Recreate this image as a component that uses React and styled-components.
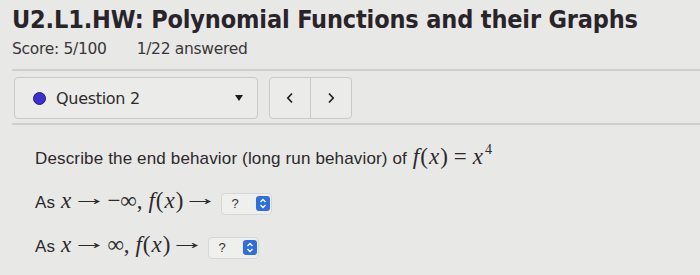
import React from "react"
import styled, { createGlobalStyle } from "styled-components"

const Global = createGlobalStyle`
  body {
    margin: 0;
    background: #e8e8e6;
    font-family: "DejaVu Sans", Verdana, sans-serif;
    color: #2b2829;
  }
`

const Page = styled.div`
  width: 700px;
  height: 275px;
  overflow: hidden;
  padding-top: 4px;
  box-sizing: border-box;
`
const Header = styled.div`
  padding-left: 12px;
`
const Title = styled.h1`
  margin: 0;
  font-family: "DejaVu Sans Condensed", "DejaVu Sans", sans-serif;
  font-stretch: condensed;
  font-size: 25px;
  font-weight: bold;
  line-height: 32px;
  letter-spacing: -0.15px;
  color: #29242a;
  white-space: nowrap;
`
const Meta = styled.div`
  display: flex;
  gap: 30px;
  margin-top: 4px;
  font-size: 15.5px;
  color: #3a3739;
  letter-spacing: -0.3px;
`
const Divider = styled.div`
  height: 2px;
  margin-left: 12px;
  background: #cfcfcd;
  margin-top: ${p => p.$top || 0}px;
`
const NavRow = styled.div`
  display: flex;
  gap: 11px;
  padding: 6px 0 4px 14px;
`
const Select = styled.div`
  width: 244px;
  height: 42px;
  box-sizing: border-box;
  border: 1.5px solid #c9c9c7;
  border-radius: 4px;
  background: #ebebe9;
  display: flex;
  align-items: center;
  padding: 0 14px 0 18px;
  font-size: 16px;
  color: #2e2b2d;
  letter-spacing: -0.3px;
`
const Dot = styled.span`
  width: 13px;
  height: 13px;
  border-radius: 50%;
  background: #3b2fcf;
  border: 1px solid #221c7a;
  box-sizing: border-box;
  margin-right: 10px;
`
const Caret = styled.span`
  margin-left: auto;
  width: 0;
  height: 0;
  border-left: 4.5px solid transparent;
  border-right: 4.5px solid transparent;
  border-top: 6px solid #1f1c1e;
`
const Pager = styled.div`
  display: flex;
  height: 42px;
  border: 1.5px solid #c9c9c7;
  border-radius: 4px;
  box-sizing: border-box;
  background: #ebebe9;
`
const PageBtn = styled.div`
  width: 40px;
  display: flex;
  align-items: center;
  justify-content: center;
  border-left: ${p => (p.$split ? "1.5px solid #c9c9c7" : "none")};
  svg { display: block; }
`
const Body = styled.div`
  padding: 18px 0 0 35px;
  font-family: "Liberation Sans", Arial, sans-serif;
  font-size: 17px;
  letter-spacing: 0.15px;
  color: #2c292b;
`
const Line = styled.div`
  height: 28px;
  line-height: 28px;
  margin-top: ${p => p.$top || 0}px;
  white-space: nowrap;
`
const M = styled.span`
  font-family: "Liberation Serif", "Times New Roman", serif;
  font-style: ${p => (p.$up ? "normal" : "italic")};
  font-size: 23px;
  letter-spacing: 0;
  margin: 0 ${p => p.$gap || 0}px;
`
const Sup = styled.sup`
  font-family: "Liberation Serif", "Times New Roman", serif;
  font-size: 14px;
  vertical-align: 10px;
  line-height: 0;
  margin-left: 2px;
`
const To = styled.span`
  display: inline-block;
  font-family: "Liberation Serif", serif;
  font-size: 21px;
  transform: scaleX(1.7);
  vertical-align: 3px;
  line-height: 1;
  margin: 0 7px;
`
const Answer = styled.span`
  display: inline-flex;
  vertical-align: middle;
  align-items: center;
  width: 51px;
  height: 22px;
  box-sizing: border-box;
  border: 1px solid #d6d6d4;
  border-radius: 4px;
  background: #efefed;
  margin-left: 2px;
  padding: 0 1px 0 10px;
  font-size: 13px;
  line-height: 1;
  color: #333;
`
const Stepper = styled.span`
  margin-left: auto;
  width: 14px;
  height: 15px;
  border-radius: 3px;
  background: #2e6ee3;
  display: flex;
  align-items: center;
  justify-content: center;
`

const Chevron = ({ left }) => (
  <svg width="10" height="14" viewBox="0 0 10 14">
    <path
      d={left ? "M7 2.5 L2.8 7 L7 11.5" : "M3 2.5 L7.2 7 L3 11.5"}
      fill="none"
      stroke="#222"
      strokeWidth="1.7"
    />
  </svg>
)

const Updown = () => (
  <svg width="8" height="11" viewBox="0 0 8 11">
    <path d="M1.5 4 L4 1.5 L6.5 4 M1.5 7 L4 9.5 L6.5 7" fill="none" stroke="#fff" strokeWidth="1.4" />
  </svg>
)

const Fx = () => (
  <>
    <M $gap={1}>f</M><M $up>(</M><M $gap={1}>x</M><M $up>)</M>
  </>
)

const App = () => (
  <Page>
    <Global />
    <Header>
      <Title>U2.L1.HW: Polynomial Functions and their Graphs</Title>
      <Meta>
        <span>Score: 5/100</span>
        <span>1/22 answered</span>
      </Meta>
    </Header>
    <Divider $top={11} />
    <NavRow>
      <Select>
        <Dot />
        Question 2
        <Caret />
      </Select>
      <Pager>
        <PageBtn><Chevron left /></PageBtn>
        <PageBtn $split><Chevron /></PageBtn>
      </Pager>
    </NavRow>
    <Divider />
    <Body>
      <Line>
        Describe the end behavior (long run behavior) of <Fx />
        <M $up $gap={6}>=</M>
        <M>x</M><Sup>4</Sup>
      </Line>
      <Line $top={16}>
        As <M $gap={1}>x</M><To>→</To><M $up>−∞,</M> <Fx /><To>→</To>
        <Answer>?<Stepper><Updown /></Stepper></Answer>
      </Line>
      <Line $top={16}>
        As <M $gap={1}>x</M><To>→</To><M $up>∞,</M> <Fx /><To>→</To>
        <Answer>?<Stepper><Updown /></Stepper></Answer>
      </Line>
    </Body>
  </Page>
)

export default App
